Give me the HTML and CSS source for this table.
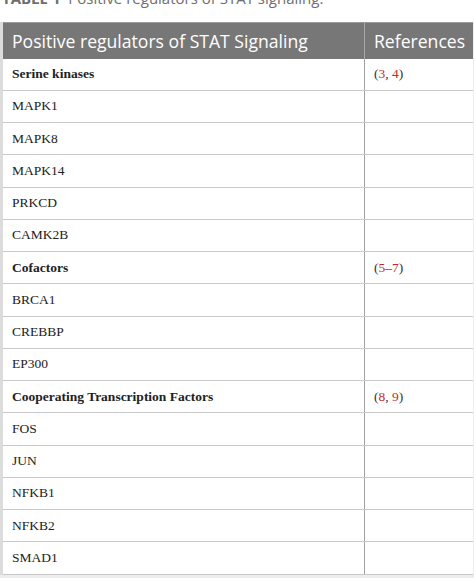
FILE: index.html
```html
<!DOCTYPE html>
<html>
<head>
<meta charset="utf-8">
<link rel="stylesheet" href="styles.css">
</head>
<body>
<div class="page">
<div class="caption"><div class="caption-text"><b>TABLE 1</b>&nbsp;&nbsp;Positive regulators of STAT signaling.</div></div>
<table class="tbl">
  <colgroup><col class="col1"><col class="col2"></colgroup>
  <thead>
    <tr><th class="c1">Positive regulators of STAT Signaling</th><th class="c2">References</th></tr>
  </thead>
  <tbody>
    <tr><td class="c1 grp">Serine kinases</td><td class="c2">(<span class="ref">3</span>, <span class="ref">4</span>)</td></tr>
    <tr><td class="c1">MAPK1</td><td class="c2"></td></tr>
    <tr><td class="c1">MAPK8</td><td class="c2"></td></tr>
    <tr><td class="c1">MAPK14</td><td class="c2"></td></tr>
    <tr><td class="c1">PRKCD</td><td class="c2"></td></tr>
    <tr><td class="c1">CAMK2B</td><td class="c2"></td></tr>
    <tr><td class="c1 grp">Cofactors</td><td class="c2">(<span class="ref">5</span>–<span class="ref">7</span>)</td></tr>
    <tr><td class="c1">BRCA1</td><td class="c2"></td></tr>
    <tr><td class="c1">CREBBP</td><td class="c2"></td></tr>
    <tr><td class="c1">EP300</td><td class="c2"></td></tr>
    <tr><td class="c1 grp">Cooperating Transcription Factors</td><td class="c2">(<span class="ref">8</span>, <span class="ref">9</span>)</td></tr>
    <tr><td class="c1">FOS</td><td class="c2"></td></tr>
    <tr><td class="c1">JUN</td><td class="c2"></td></tr>
    <tr><td class="c1">NFKB1</td><td class="c2"></td></tr>
    <tr><td class="c1">NFKB2</td><td class="c2"></td></tr>
    <tr><td class="c1">SMAD1</td><td class="c2"></td></tr>
  </tbody>
</table>
</div>
</body>
</html>
```
FILE: styles.css
```css
html, body {
  margin: 0;
  padding: 0;
  background: #ededed;
}
.page {
  width: 474px;
  height: 578px;
  overflow: hidden;
  background: #ededed;
  padding-top: 0.1px;
  box-sizing: border-box;
}
.caption {
  height: 22px;
  overflow: hidden;
  background: #ffffff;
}
.caption-text {
  font-family: "Open Sans", sans-serif;
  font-size: 15px;
  color: #6e6e6e;
  line-height: 16px;
  margin-top: -10px;
  padding-left: 2px;
  white-space: nowrap;
}
.caption b { font-weight: 700; }
.tbl {
  border-collapse: collapse;
  width: 471px;
  table-layout: fixed;
  background: #ffffff;
  border-left: 3px solid #dcdcdc;
}
.col1 { width: 363px; }
.col2 { width: 108px; }
.tbl th {
  background: #777777;
  color: #ffffff;
  font-family: "Open Sans", sans-serif;
  font-weight: 400;
  font-size: 17.6px;
  text-align: left;
  height: 36px;
  box-sizing: border-box;
  padding: 0 0 0 9px;
  border-top: 1px solid #9a9a9a;
  white-space: nowrap;
  overflow: hidden;
}
.tbl th.c2 {
  border-left: 1px solid #a8a8a8;
}
.tbl td {
  font-family: "Liberation Serif", serif;
  font-size: 13.5px;
  color: #222222;
  height: 31.25px;
  padding: 0 0 0 9px;
  border-bottom: 1px solid #c9c9c9;
  white-space: nowrap;
}
.tbl td.c2 {
  border-left: 1px solid #a0a0a0;
  color: #333333;
}
.tbl td.grp { font-weight: 700; }
.ref { color: #c8282c; }
```
